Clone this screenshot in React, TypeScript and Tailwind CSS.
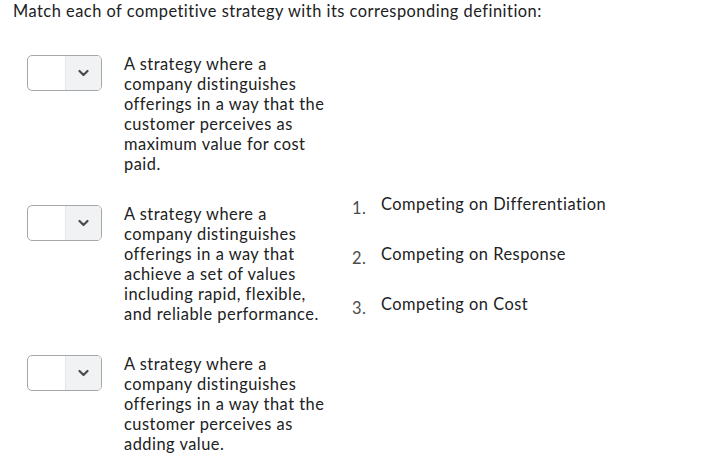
import { useState } from "react";

const DEFINITIONS = [
  "A strategy where a company distinguishes offerings in a way that the customer perceives as maximum value for cost paid.",
  "A strategy where a company distinguishes offerings in a way that achieve a set of values including rapid, flexible, and reliable performance.",
  "A strategy where a company distinguishes offerings in a way that the customer perceives as adding value.",
];

const CHOICES = [
  "Competing on Differentiation",
  "Competing on Response",
  "Competing on Cost",
];

function MatchSelect({ value, onChange }: { value: string; onChange: (v: string) => void }) {
  return (
    <label className="relative mt-[1px] flex h-[36px] w-[75px] shrink-0 overflow-hidden rounded-[5px] border border-[#a5a8ab] bg-white">
      <select
        value={value}
        onChange={(e) => onChange(e.target.value)}
        className="absolute inset-0 cursor-pointer appearance-none opacity-0"
      >
        <option value=""></option>
        {CHOICES.map((c, i) => (
          <option key={c} value={String(i + 1)}>
            {i + 1}
          </option>
        ))}
      </select>
      <span className="flex flex-1 items-center pl-2 text-[16px] text-[#202122]">{value}</span>
      <span className="flex w-[36px] items-center justify-center border-l border-[#e3e5e8] bg-[#f1f2f4]">
        <svg width="11" height="8" viewBox="0 0 11 8" fill="none">
          <polyline
            points="1.5,2 5.5,6 9.5,2"
            stroke="#494c4e"
            strokeWidth="2.2"
            strokeLinecap="round"
            strokeLinejoin="round"
          />
        </svg>
      </span>
    </label>
  );
}

export default function App() {
  const [answers, setAnswers] = useState<string[]>(["", "", ""]);

  return (
    <div className="min-h-[476px] bg-white pl-[13px] pt-[1px] font-['Lato','Liberation_Sans',sans-serif] text-[16.4px] leading-[20px] tracking-[0.5px] text-[#202122]">
      <p>Match each of competitive strategy with its corresponding definition:</p>

      <div className="mt-[33px] flex items-center">
        {/* Definitions with their dropdowns */}
        <div className="flex flex-col gap-[30px] pl-[14px]">
          {DEFINITIONS.map((def, idx) => (
            <div key={idx} className="flex items-start gap-[22px]">
              <MatchSelect
                value={answers[idx]}
                onChange={(v) =>
                  setAnswers((prev) => prev.map((a, i) => (i === idx ? v : a)))
                }
              />
              <p className="w-[205px]">{def}</p>
            </div>
          ))}
        </div>

        {/* Numbered choices */}
        <ol className="ml-[23px] flex flex-col gap-[30px]">
          {CHOICES.map((choice, i) => (
            <li key={choice} className="flex">
              <span className="w-[29px] translate-y-[4px] text-[#494c4e]">{i + 1}.</span>
              <span>{choice}</span>
            </li>
          ))}
        </ol>
      </div>
    </div>
  );
}
